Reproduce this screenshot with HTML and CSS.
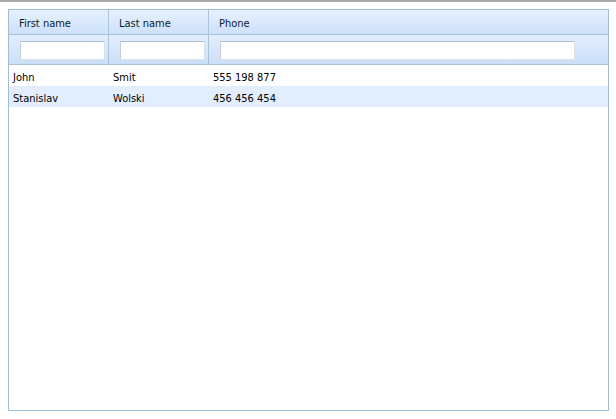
FILE: index.html
```html
<!DOCTYPE html>
<html>
<head>
<meta charset="utf-8">
<link rel="stylesheet" href="styles.css">
</head>
<body>
<div class="topline"></div>
<div class="grid">
  <div class="hrow">
    <div class="hcell c1">First name</div>
    <div class="hcell c2">Last name</div>
    <div class="hcell c3">Phone</div>
  </div>
  <div class="frow">
    <div class="fcell c1"><input class="finput w1" type="text"></div>
    <div class="fcell c2"><input class="finput w1" type="text"></div>
    <div class="fcell c3"><input class="finput w3" type="text"></div>
  </div>
  <div class="body">
    <div class="row">
      <div class="cell c1">John</div>
      <div class="cell c2">Smit</div>
      <div class="cell c3">555 198 877</div>
    </div>
    <div class="row alt">
      <div class="cell c1">Stanislav</div>
      <div class="cell c2">Wolski</div>
      <div class="cell c3">456 456 454</div>
    </div>
  </div>
</div>
</body>
</html>
```
FILE: styles.css
```css
html, body {
  margin: 0;
  padding: 0;
  background: #fff;
}
body {
  font-family: "DejaVu Sans Condensed", "DejaVu Sans", "Liberation Sans", sans-serif;
  font-stretch: condensed;
  font-size: 11px;
  color: #000;
}
.topline {
  height: 2px;
  background: #a9a9a9;
}
.grid {
  margin: 7px 0 0 8px;
  width: 599px;
  height: 400px;
  border: 1px solid #9fbdd6;
  display: flex;
  flex-direction: column;
}
.hrow, .frow, .row {
  display: flex;
}
.c1, .c2 { width: 100px; flex: none; }
.c3 { flex: 1; }
.hrow {
  height: 24px;
  border-bottom: 1px solid #a8c2d9;
  background: linear-gradient(#e6f1fe, #cde1fa);
}
.hcell {
  display: flex;
  align-items: center;
  padding-left: 10px;
  padding-top: 2px;
  box-sizing: border-box;
  color: #0d1a2b;
}
.hcell.c1, .hcell.c2, .fcell.c1, .fcell.c2 {
  border-right: 1px solid #a8c2d9;
}
.frow {
  height: 29px;
  border-bottom: 1px solid #a8c2d9;
  background: linear-gradient(#e2eefd, #cbdff9);
}
.fcell {
  display: flex;
  align-items: center;
  padding-left: 11px;
  padding-top: 2px;
  box-sizing: border-box;
}
.finput {
  box-sizing: border-box;
  height: 19px;
  margin: 0;
  padding: 0;
  border: 1px solid #d8e1ea;
  border-top-color: #b1bfcc;
  border-left-color: #c4cfda;
  border-radius: 1px;
  background: #fff;
  outline: none;
}
.w1 { width: 85px; }
.w3 { width: 355px; }
.row {
  height: 21px;
}
.row.alt { background: #e2eefd; }
.cell {
  display: flex;
  align-items: center;
  padding-left: 4px;
  padding-top: 3px;
  box-sizing: border-box;
}
```
